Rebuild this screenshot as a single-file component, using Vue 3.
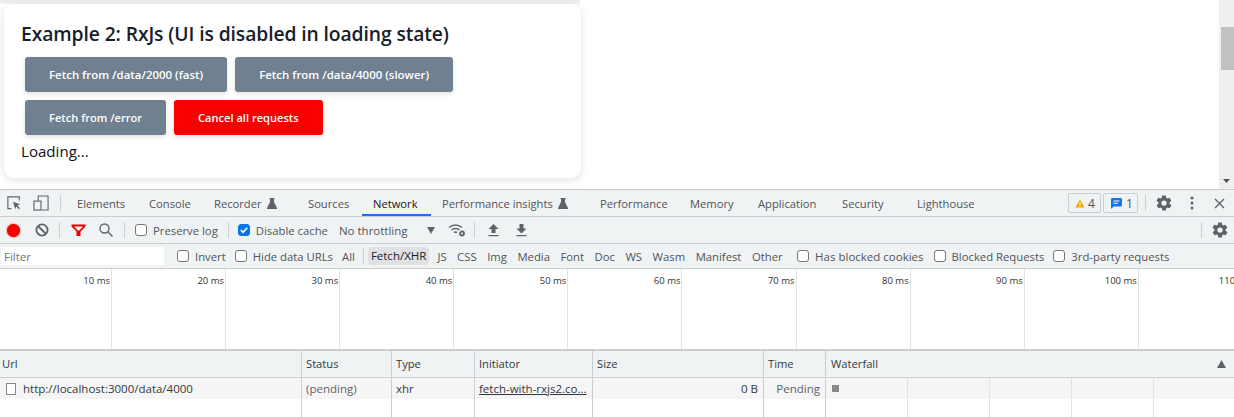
<script setup>
const tabs = [
  { label: 'Elements', w: 72 },
  { label: 'Console', w: 65 },
  { label: 'Recorder', w: 94, flask: true },
  { label: 'Sources', w: 65 },
  { label: 'Network', w: 69, active: true },
  { label: 'Performance insights', w: 158, flask: true },
  { label: 'Performance', w: 90 },
  { label: 'Memory', w: 68 },
  { label: 'Application', w: 84 },
  { label: 'Security', w: 75 },
  { label: 'Lighthouse', w: 100 },
]
const types = ['JS', 'CSS', 'Img', 'Media', 'Font', 'Doc', 'WS', 'Wasm', 'Manifest', 'Other']
const ticks = ['10 ms', '20 ms', '30 ms', '40 ms', '50 ms', '60 ms', '70 ms', '80 ms', '90 ms', '100 ms', '110 ms']
const columns = [
  { label: 'Url', w: 302 },
  { label: 'Status', w: 90 },
  { label: 'Type', w: 83 },
  { label: 'Initiator', w: 118 },
  { label: 'Size', w: 171 },
  { label: 'Time', w: 62 },
]
const gear = 'M19.400 13a7.500 7.500 0 0 0 0-2l2.100-1.600a.5.500 0 0 0 .1-.6l-2-3.500a.5.500 0 0 0-.6-.2l-2.500 1a7.300 7.300 0 0 0-1.700-1l-.4-2.600a.5.500 0 0 0-.5-.5h-4a.5.500 0 0 0-.5.400l-.4 2.700a7.700 7.700 0 0 0-1.700 1l-2.500-1a.5.500 0 0 0-.6.200l-2 3.500a.5.500 0 0 0 .1.600L4.600 11a7.500 7.500 0 0 0 0 2l-2.100 1.600a.5.500 0 0 0-.1.600l2 3.500a.5.500 0 0 0 .6.200l2.500-1c.5.400 1.100.7 1.700 1l.4 2.600a.5.500 0 0 0 .5.500h4a.5.500 0 0 0 .5-.4l.4-2.700a7.700 7.700 0 0 0 1.700-1l2.500 1a.5.500 0 0 0 .6-.2l2-3.500a.5.500 0 0 0-.1-.6zM12 15.500a3.500 3.500 0 1 1 0-7 3.500 3.500 0 0 1 0 7z'
</script>

<template>
  <div class="page">
    <div class="viewport">
      <div class="content">
        <div class="prev-card"></div>
        <section class="card">
          <h2>Example 2: RxJs (UI is disabled in loading state)</h2>
          <div class="buttons">
            <button class="btn">Fetch from /data/2000 (fast)</button>
            <button class="btn">Fetch from /data/4000 (slower)</button>
            <button class="btn small">Fetch from /error</button>
            <button class="btn small danger">Cancel all requests</button>
          </div>
          <p class="loading">Loading...</p>
        </section>
      </div>
      <div class="scrollbar">
        <div class="track"><div class="thumb"></div></div>
        <svg class="arrow" width="15" height="17" viewBox="0 0 15 17"><path d="M4 7h7l-3.500 4z" fill="#505050" /></svg>
      </div>
    </div>

    <div class="devtools">
      <div class="tabbar">
        <div class="tab-icons">
          <svg width="14" height="14" viewBox="0 0 16 16" fill="none">
            <path d="M5 14.500H1V1h13v4" stroke="#5f6368" stroke-width="1.300" />
            <path d="M7 6.500l8 3-3.200 1.300 3 3-1.200 1.200-3-3-1.300 3.200z" fill="#5f6368" />
          </svg>
          <svg class="device" width="16" height="16" viewBox="0 0 17 17" fill="none" stroke="#5f6368" stroke-width="1.200">
            <path d="M5.500 6V1h10.500v15H9" />
            <rect x="1" y="6.500" width="7.500" height="9.500" />
          </svg>
          <i class="vsep icons-sep"></i>
        </div>
        <div v-for="t in tabs" :key="t.label" class="tab" :class="{ active: t.active }" :style="{ width: t.w + 'px' }">
          <span>{{ t.label }}</span>
          <svg v-if="t.flask" class="flask" width="10" height="11" viewBox="0 0 10 11"><path d="M2.500 0h5v1H7v3l3 6v1H0v-1l3-6V1h-.5z" fill="#5f6368" /></svg>
        </div>
        <div class="tab-right">
          <span class="badge warn">
            <svg width="10" height="9" viewBox="0 0 14 12"><path d="M7 .5L13.500 11.500H.5z" fill="#f2a600" /><path d="M6.300 4h1.400v4H6.300zM6.300 9h1.400v1.300H6.300z" fill="#fff" /></svg>
            4
          </span>
          <span class="badge msg">
            <svg width="11" height="11" viewBox="0 0 13 13"><path d="M1.500 0h10A1.500 1.500 0 0 1 13 1.500v7A1.500 1.500 0 0 1 11.500 10H3l-3 3V1.500A1.500 1.500 0 0 1 1.500 0z" fill="#1a73e8" /><path d="M3 3h7v1.200H3zM3 5.500h5v1.200H3z" fill="#fff" /></svg>
            1
          </span>
          <i class="vsep right-sep"></i>
          <svg width="18" height="18" viewBox="0 0 24 24"><path fill="#5f6368" :d="gear" /></svg>
          <svg class="dots" width="4" height="14" viewBox="0 0 4 14"><circle cx="2" cy="2" r="1.500" fill="#5f6368" /><circle cx="2" cy="7" r="1.500" fill="#5f6368" /><circle cx="2" cy="12" r="1.500" fill="#5f6368" /></svg>
          <svg width="11" height="11" viewBox="0 0 11 11"><path d="M1 1l9 9M10 1l-9 9" stroke="#5f6368" stroke-width="1.400" /></svg>
        </div>
      </div>

      <div class="toolbar">
        <span class="record"></span>
        <svg class="stop" width="14" height="14" viewBox="0 0 14 14" fill="none" stroke="#5f6368" stroke-width="1.800"><circle cx="7" cy="7" r="5.600" /><path d="M3 3l8 8" /></svg>
        <i class="vsep sep-a"></i>
        <svg class="funnel" width="15" height="13" viewBox="0 0 15 13"><path d="M.5.500h14v2L9.500 7.500V12h-4V7.500L.5 2.500z" fill="#ea0000" /><path d="M3 2.500h9l-3.800 4H6.800z" fill="#f1f3f4" /></svg>
        <svg class="search" width="14" height="14" viewBox="0 0 14 14" fill="none" stroke="#5f6368" stroke-width="1.400"><circle cx="5.500" cy="5.500" r="4.500" /><path d="M8.800 8.800l4.700 4.700" /></svg>
        <i class="vsep sep-b"></i>
        <label class="check first"><span class="box"></span>Preserve log</label>
        <i class="vsep sep-c"></i>
        <label class="check"><span class="box checked"><svg width="10" height="10" viewBox="0 0 11 11"><path d="M2 5.500l2.500 2.500L9 3" fill="none" stroke="#fff" stroke-width="1.800" /></svg></span>Disable cache</label>
        <span class="throttle">No throttling</span>
        <svg class="caret" width="8" height="7" viewBox="0 0 8 7"><path d="M0 0h8L4 7z" fill="#5f6368" /></svg>
        <svg class="wifi" width="18" height="14" viewBox="0 0 18 14" fill="none" stroke="#5f6368" stroke-width="1.500"><path d="M1 4.500a10 10 0 0 1 13 0M3.500 7a6.500 6.500 0 0 1 8 0M6 9.500a3 3 0 0 1 3 0" /><circle cx="14" cy="10.500" r="2" stroke-width="1.800" /></svg>
        <i class="vsep sep-d"></i>
        <svg class="updown" width="11" height="13" viewBox="0 0 11 13"><path d="M5.500 0l5 5H7.500v4h-4V5H.5zM.5 11h10v1.300H.5z" fill="#5f6368" /></svg>
        <svg class="updown second" width="11" height="13" viewBox="0 0 11 13"><path d="M3.500 0h4v4.500h3l-5 5-5-5h3zM.5 11h10v1.300H.5z" fill="#5f6368" /></svg>
        <div class="toolbar-end">
          <i class="vsep"></i>
          <svg width="18" height="18" viewBox="0 0 24 24"><path fill="#5f6368" :d="gear" /></svg>
        </div>
      </div>

      <div class="filterbar">
        <div class="filter-input">Filter</div>
        <label class="check invert"><span class="box"></span>Invert</label>
        <label class="check hide"><span class="box"></span>Hide data URLs</label>
        <span class="type all">All</span>
        <i class="vsep sep-e"></i>
        <span class="type selected">Fetch/XHR</span>
        <span v-for="t in types" :key="t" class="type">{{ t }}</span>
        <label class="check cookies"><span class="box"></span>Has blocked cookies</label>
        <label class="check blocked"><span class="box"></span>Blocked Requests</label>
        <label class="check third"><span class="box"></span>3rd-party requests</label>
      </div>

      <div class="timeline">
        <div v-for="t in ticks" :key="t" class="tick">{{ t }}</div>
      </div>

      <div class="table-head">
        <div v-for="c in columns" :key="c.label" class="th" :style="{ width: c.w + 'px' }">{{ c.label }}</div>
        <div class="th waterfall">Waterfall<svg width="9" height="8" viewBox="0 0 9 8"><path d="M4.500 0l4.500 8H0z" fill="#5f6368" /></svg></div>
      </div>
      <div class="table-row">
        <div class="td url" :style="{ width: columns[0].w + 'px' }"><span class="file"></span>http://localhost:3000/data/4000</div>
        <div class="td muted" :style="{ width: columns[1].w + 'px' }">(pending)</div>
        <div class="td" :style="{ width: columns[2].w + 'px' }">xhr</div>
        <div class="td link" :style="{ width: columns[3].w + 'px' }"><u>fetch-with-rxjs2.co...</u></div>
        <div class="td end" :style="{ width: columns[4].w + 'px' }">0 B</div>
        <div class="td end muted" :style="{ width: columns[5].w + 'px' }">Pending</div>
        <div class="td wf"><span class="bar"></span></div>
      </div>
      <div class="table-fill">
        <div v-for="c in columns" :key="c.label" class="cell" :style="{ width: c.w + 'px' }"></div>
        <div class="cell wf-fill"></div>
      </div>
    </div>
  </div>
</template>

<style>
html, body { margin: 0; background: #fff; overflow: hidden; }
</style>

<style scoped>
.page {
  width: 1234px;
  height: 417px;
  overflow: hidden;
  display: flex;
  flex-direction: column;
  font-family: "Open Sans", "Noto Sans", sans-serif;
}
.viewport {
  height: 189px;
  display: flex;
  flex: none;
  overflow: hidden;
  border-bottom: 1px solid #cbcdd1;
}
.content { flex: 1; min-width: 0; overflow: hidden; }
.prev-card {
  width: 580px;
  height: 4px;
  background: linear-gradient(#ececec, #f5f5f5);
}
.card {
  box-sizing: border-box;
  width: 577px;
  height: 174px;
  margin-left: 4px;
  padding: 17px 16px 0 17px;
  background: #fff;
  border-radius: 9px;
  box-shadow: 0 2px 8px rgba(0, 0, 0, 0.12);
}
h2 {
  margin: 0 0 10px;
  font-size: 19.300px;
  line-height: 26px;
  font-weight: 600;
  color: #17202b;
  white-space: nowrap;
  letter-spacing: -0.1px;
}
.buttons { display: flex; flex-wrap: wrap; width: 500px; }
.btn {
  height: 35px;
  margin: 0 4px 8px;
  padding: 0 24px;
  border: 0;
  border-radius: 3px;
  background: #708090;
  color: #fff;
  font: 600 11.440px "Open Sans", sans-serif;
  box-shadow: 0 2px 5px rgba(0, 0, 0, 0.12);
}
.btn.small { font-size: 11.100px; }
.btn.danger { background: #f70000; }
.loading { margin: -4px 0 0; font-size: 15.100px; line-height: 24px; color: #111; }
.scrollbar {
  width: 15px;
  flex: none;
  background: #efefef;
  display: flex;
  flex-direction: column;
}
.arrow { flex: none; }
.track { flex: 1; padding: 27px 0 0 2px; }
.thumb { height: 43px; background: #c1c1c1; }

.devtools {
  flex: 1;
  min-height: 0;
  display: flex;
  flex-direction: column;
  font-size: 11.500px;
  color: #50545a;
  background: #fff;
}
.tabbar {
  height: 26px;
  flex: none;
  display: flex;
  align-items: center;
  background: #f0f3f4;
  border-bottom: 1px solid #cbcdd1;
}
.tab-icons {
  width: 66px;
  flex: none;
  display: flex;
  align-items: center;
  padding-left: 7px;
  box-sizing: border-box;
}
.device { margin-left: 12px; }
.icons-sep { margin-left: 11px; }
.vsep { display: inline-block; width: 1px; height: 16px; background: #cbcdd1; flex: none; }
.tab {
  height: 26px;
  flex: none;
  display: flex;
  align-items: center;
  gap: 5px;
  padding-left: 11px;
  box-sizing: border-box;
  white-space: nowrap;
  font-size: 11.200px;
}
.tab.active { color: #202124; border-bottom: 2px solid #1a73e8; padding-top: 2px; }
.tab-right { margin-left: auto; display: flex; align-items: center; padding-right: 9px; }
.badge {
  box-sizing: border-box;
  display: inline-flex;
  align-items: center;
  gap: 3px;
  height: 20px;
  border: 1px solid #cbcdd1;
  border-radius: 2px;
  font-size: 12px;
}
.badge.warn { width: 33px; padding-left: 6px; }
.badge.msg { width: 35px; padding-left: 7px; margin-left: 2px; gap: 4px; }
.right-sep { margin: 0 9px 0 7px; }
.dots { margin: 0 20px 0 17px; }

.toolbar {
  height: 26px;
  flex: none;
  display: flex;
  align-items: center;
  background: #f0f3f4;
  border-bottom: 1px solid #cbcdd1;
  white-space: nowrap;
}
.record { width: 13px; height: 13px; border-radius: 50%; background: #f80000; margin-left: 7px; box-shadow: 0 0 2px #f80000; }
.stop { margin-left: 15px; }
.sep-a { margin-left: 10px; }
.funnel { margin-left: 11px; }
.search { margin-left: 13px; }
.sep-b { margin-left: 11px; }
.check { display: inline-flex; align-items: center; gap: 6px; font-size: 11.300px; }
.check.first { margin-left: 10px; }
.box {
  width: 10px;
  height: 10px;
  border: 1px solid #767676;
  border-radius: 3px;
  background: #fff;
  flex: none;
  display: inline-flex;
  align-items: center;
  justify-content: center;
}
.box.checked { background: #0b74ea; border-color: #0b74ea; }
.sep-c { margin-left: 10px; margin-right: 9px; }
.throttle { margin-left: 11px; width: 70px; font-size: 11.500px; }
.caret { margin-left: 18px; }
.wifi { margin-left: 13px; }
.sep-d { margin-left: 8px; }
.updown { margin-left: 13px; }
.updown.second { margin-left: 17px; }
.toolbar-end { margin-left: auto; display: flex; align-items: center; gap: 9px; padding-right: 5px; }

.filterbar {
  height: 24px;
  flex: none;
  display: flex;
  align-items: center;
  background: #f0f3f4;
  border-bottom: 1px solid #cbcdd1;
  white-space: nowrap;
}
.filter-input {
  width: 160px;
  height: 18px;
  margin-left: 1px;
  padding-left: 3px;
  background: #fff;
  line-height: 20px;
  font-size: 11.500px;
  color: #757575;
}
.check.invert { margin-left: 13px; }
.check.hide { margin-left: 9px; }
.type { font-size: 11.300px; margin-left: 10.500px; }
.type.all { margin-left: 9px; }
.sep-e { margin-left: 8px; }
.type.selected {
  margin-left: 4px;
  padding: 0 3px;
  height: 18px;
  line-height: 18px;
  border-radius: 4px;
  background: #dfe1e5;
  color: #202124;
  font-size: 11.500px;
}
.type.selected + .type { margin-left: 8px; }
.check.cookies { margin-left: 14.500px; font-size: 11.500px; }
.check.blocked { margin-left: 10px; }
.check.third { margin-left: 9px; }

.timeline {
  height: 80px;
  flex: none;
  display: flex;
  overflow: hidden;
  background: #fff;
  border-bottom: 2px solid #cbcdd1;
}
.tick {
  width: 114.100px;
  flex: none;
  box-sizing: border-box;
  border-right: 1px solid #e3e3e3;
  text-align: right;
  padding: 5px 1px 0 0;
  font-size: 9.500px;
  color: #333;
  white-space: nowrap;
}
.tick:first-child { width: 112px; }
.table-head {
  height: 26px;
  flex: none;
  display: flex;
  background: #f0f3f4;
  border-bottom: 1px solid #cbcdd1;
}
.th {
  flex: none;
  box-sizing: border-box;
  padding: 0 4px;
  line-height: 26px;
  border-right: 1px solid #cbcdd1;
  font-size: 11.200px;
  color: #303942;
}
.th:first-child { padding-left: 2px; }
.waterfall {
  flex: 1;
  display: flex;
  align-items: center;
  justify-content: space-between;
  border-right: 0;
  padding-right: 8px;
  padding-left: 5px;
}
.table-row { height: 21px; flex: none; display: flex; background: #f5f5f5; }
.td {
  flex: none;
  box-sizing: border-box;
  padding: 0 4px;
  line-height: 21px;
  border-right: 1px solid #cbcdd1;
  font-size: 11.500px;
  color: #303942;
  white-space: nowrap;
  overflow: hidden;
}
.td.end { text-align: right; padding-right: 5px; }
.td.muted { color: #5f6368; }
.url { display: flex; align-items: center; gap: 7px; padding-left: 6px; }
.file { width: 8px; height: 10px; border: 1px solid #888; background: #fff; flex: none; }
.wf {
  flex: 1;
  border-right: 0;
  padding: 0;
  position: relative;
  background-image: repeating-linear-gradient(90deg, transparent 0 81px, #e3e3e3 81px 82px);
}
.bar { position: absolute; left: 6px; top: 7px; width: 7px; height: 7px; background: #888; }
.table-fill { flex: 1; display: flex; background: #fff; }
.cell { flex: none; box-sizing: border-box; border-right: 1px solid #cbcdd1; }
.wf-fill { flex: 1; border-right: 0; background-image: repeating-linear-gradient(90deg, transparent 0 81px, #e3e3e3 81px 82px); }
</style>
